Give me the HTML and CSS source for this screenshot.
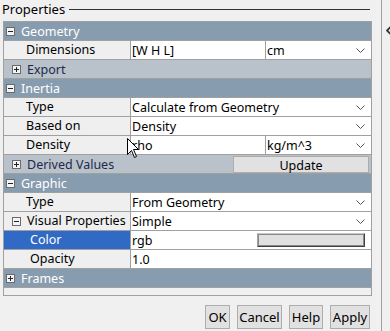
FILE: index.html
```html
<!DOCTYPE html>
<html>
<head>
<meta charset="utf-8">
<title>Properties</title>
<link rel="stylesheet" href="styles.css">
</head>
<body>
<div class="window">
  <div class="main">
    <div class="legend"><span>Properties</span><i class="rule"></i></div>
    <div class="grid">
      <div class="row cat"><span class="tog"></span>Geometry</div>
      <div class="row">
        <div class="name">Dimensions</div>
        <div class="val"><span class="cell first">[W H L]</span><span class="cell combo">cm<svg class="dd" width="9" height="5" viewBox="0 0 9 5"><path d="M0.5 0.5 L4.5 4.5 L8.5 0.5" fill="none" stroke="#555"/></svg></span></div>
      </div>
      <div class="row sub"><span class="tog plus"></span>Export</div>
      <div class="row cat"><span class="tog"></span>Inertia</div>
      <div class="row">
        <div class="name">Type</div>
        <div class="val"><span class="cell combo">Calculate from Geometry<svg class="dd" width="9" height="5" viewBox="0 0 9 5"><path d="M0.5 0.5 L4.5 4.5 L8.5 0.5" fill="none" stroke="#555"/></svg></span></div>
      </div>
      <div class="row">
        <div class="name">Based on</div>
        <div class="val"><span class="cell combo">Density<svg class="dd" width="9" height="5" viewBox="0 0 9 5"><path d="M0.5 0.5 L4.5 4.5 L8.5 0.5" fill="none" stroke="#555"/></svg></span></div>
      </div>
      <div class="row">
        <div class="name">Density</div>
        <div class="val"><span class="cell first">rho</span><span class="cell combo">kg/m^3<svg class="dd" width="9" height="5" viewBox="0 0 9 5"><path d="M0.5 0.5 L4.5 4.5 L8.5 0.5" fill="none" stroke="#555"/></svg></span></div>
      </div>
      <div class="row sub"><span class="tog plus"></span>Derived Values<button class="update">Update</button></div>
      <div class="row cat"><span class="tog"></span>Graphic</div>
      <div class="row">
        <div class="name">Type</div>
        <div class="val"><span class="cell combo">From Geometry<svg class="dd" width="9" height="5" viewBox="0 0 9 5"><path d="M0.5 0.5 L4.5 4.5 L8.5 0.5" fill="none" stroke="#555"/></svg></span></div>
      </div>
      <div class="row">
        <div class="name nest"><span class="tog small"></span>Visual Properties</div>
        <div class="val"><span class="cell combo">Simple<svg class="dd" width="9" height="5" viewBox="0 0 9 5"><path d="M0.5 0.5 L4.5 4.5 L8.5 0.5" fill="none" stroke="#555"/></svg></span></div>
      </div>
      <div class="row">
        <div class="name deep selected">Color</div>
        <div class="val"><span class="cell combo">rgb<span class="swatch"></span></span></div>
      </div>
      <div class="row">
        <div class="name deep">Opacity</div>
        <div class="val"><span class="cell">1.0</span></div>
      </div>
      <div class="row cat"><span class="tog plus"></span>Frames</div>
    </div>
    <div class="buttons">
      <button class="btn ok">OK</button>
      <button class="btn cancel">Cancel</button>
      <button class="btn help">Help</button>
      <button class="btn apply">Apply</button>
    </div>
  </div>
  <div class="side">
    <svg class="collapse" width="6" height="9" viewBox="0 0 6 9"><path d="M5 0.5 L1 4.5 L5 8.5" fill="none" stroke="#333" stroke-width="1.8"/></svg>
  </div>
  <svg class="cursor" width="13" height="21" viewBox="0 0 13 21"><path d="M0.5 0.5 L0.5 16.5 L4.5 12.5 L7.5 19.5 L9.5 18.5 L6.5 11.5 L11.5 11.5 Z" fill="#fff" stroke="#000"/></svg>
</div>
</body>
</html>
```
FILE: styles.css
```css
body{margin:0;background:#f0f0f0;font:12.5px "Noto Sans",Arial,sans-serif;color:#000;}
.window{position:relative;display:flex;width:390px;height:331px;}
.main{width:381px;}
.side{border-left:1px solid #a0a0a0;padding-top:26px;padding-left:4px;box-sizing:border-box;width:9px;}
.collapse{display:block;}

.legend{display:flex;align-items:center;height:18px;margin-bottom:3px;padding-left:2px;font-size:13px;}
.legend .rule{flex:1;height:1px;background:#333;margin:0 11px 0 4px;}

.grid{margin-left:3px;width:369px;height:275px;border:1px solid #a0a0a0;box-sizing:border-box;background:#f0f0f0;}
.row{display:flex;align-items:center;height:18px;border-bottom:1px solid #a0a0a0;background:#fff;}
.row.cat{background:#889cb0;color:#fff;padding-left:2px;}
.row.sub{background:#b9c2cb;color:#1e2a4a;padding-left:8px;}
.row.cat .tog,.row.sub .tog{margin-right:6px;}

.tog{position:relative;display:inline-block;width:9px;height:9px;box-sizing:border-box;border:1px solid #6b6b6b;background:#f4f4f4;}
.tog::before{content:"";position:absolute;left:1px;top:3px;width:5px;height:1px;background:#222;}
.tog.plus::after{content:"";position:absolute;left:3px;top:1px;width:1px;height:5px;background:#222;}

.name{width:127px;height:18px;line-height:18px;box-sizing:border-box;padding-left:22px;background:#efefef;border-right:1px solid #a0a0a0;white-space:nowrap;}
.name.nest{padding-left:8px;display:flex;align-items:center;}
.name.nest .tog{margin-right:6px;}
.name.deep{padding-left:26px;}
.name.selected{background:#316ac5;color:#fff;}

.val{flex:1;display:flex;height:18px;}
.cell{flex:1;display:flex;align-items:center;padding-left:1px;white-space:nowrap;}
.cell.first{flex:none;width:133px;border-right:1px solid #a0a0a0;}
.cell.combo{padding-right:6px;}
.dd{margin-left:auto;}

.swatch{margin-left:auto;width:108px;height:14px;box-sizing:border-box;border:1px solid;border-color:#c8c8c8 #404040 #404040 #a0a0a0;box-shadow:inset 0 0 0 1px #8a8a8a;background:#e0e0e0;}

.update{margin-left:auto;margin-right:2px;width:136px;height:17px;padding:0;border:1px solid #adadad;background:#e1e1e1;font:12.5px "Noto Sans",Arial,sans-serif;color:#000;}

.buttons{display:flex;justify-content:flex-end;gap:7px;padding-right:11px;margin-top:9px;}
.btn{height:24px;padding:0;border:1px solid #adadad;background:#e1e1e1;font:13px "Noto Sans",Arial,sans-serif;color:#000;}
.btn.ok{width:25px;}
.btn.cancel{width:45px;}
.btn.help{width:34px;}
.btn.apply{width:40px;}

.cursor{position:absolute;left:127px;top:138px;}
```
